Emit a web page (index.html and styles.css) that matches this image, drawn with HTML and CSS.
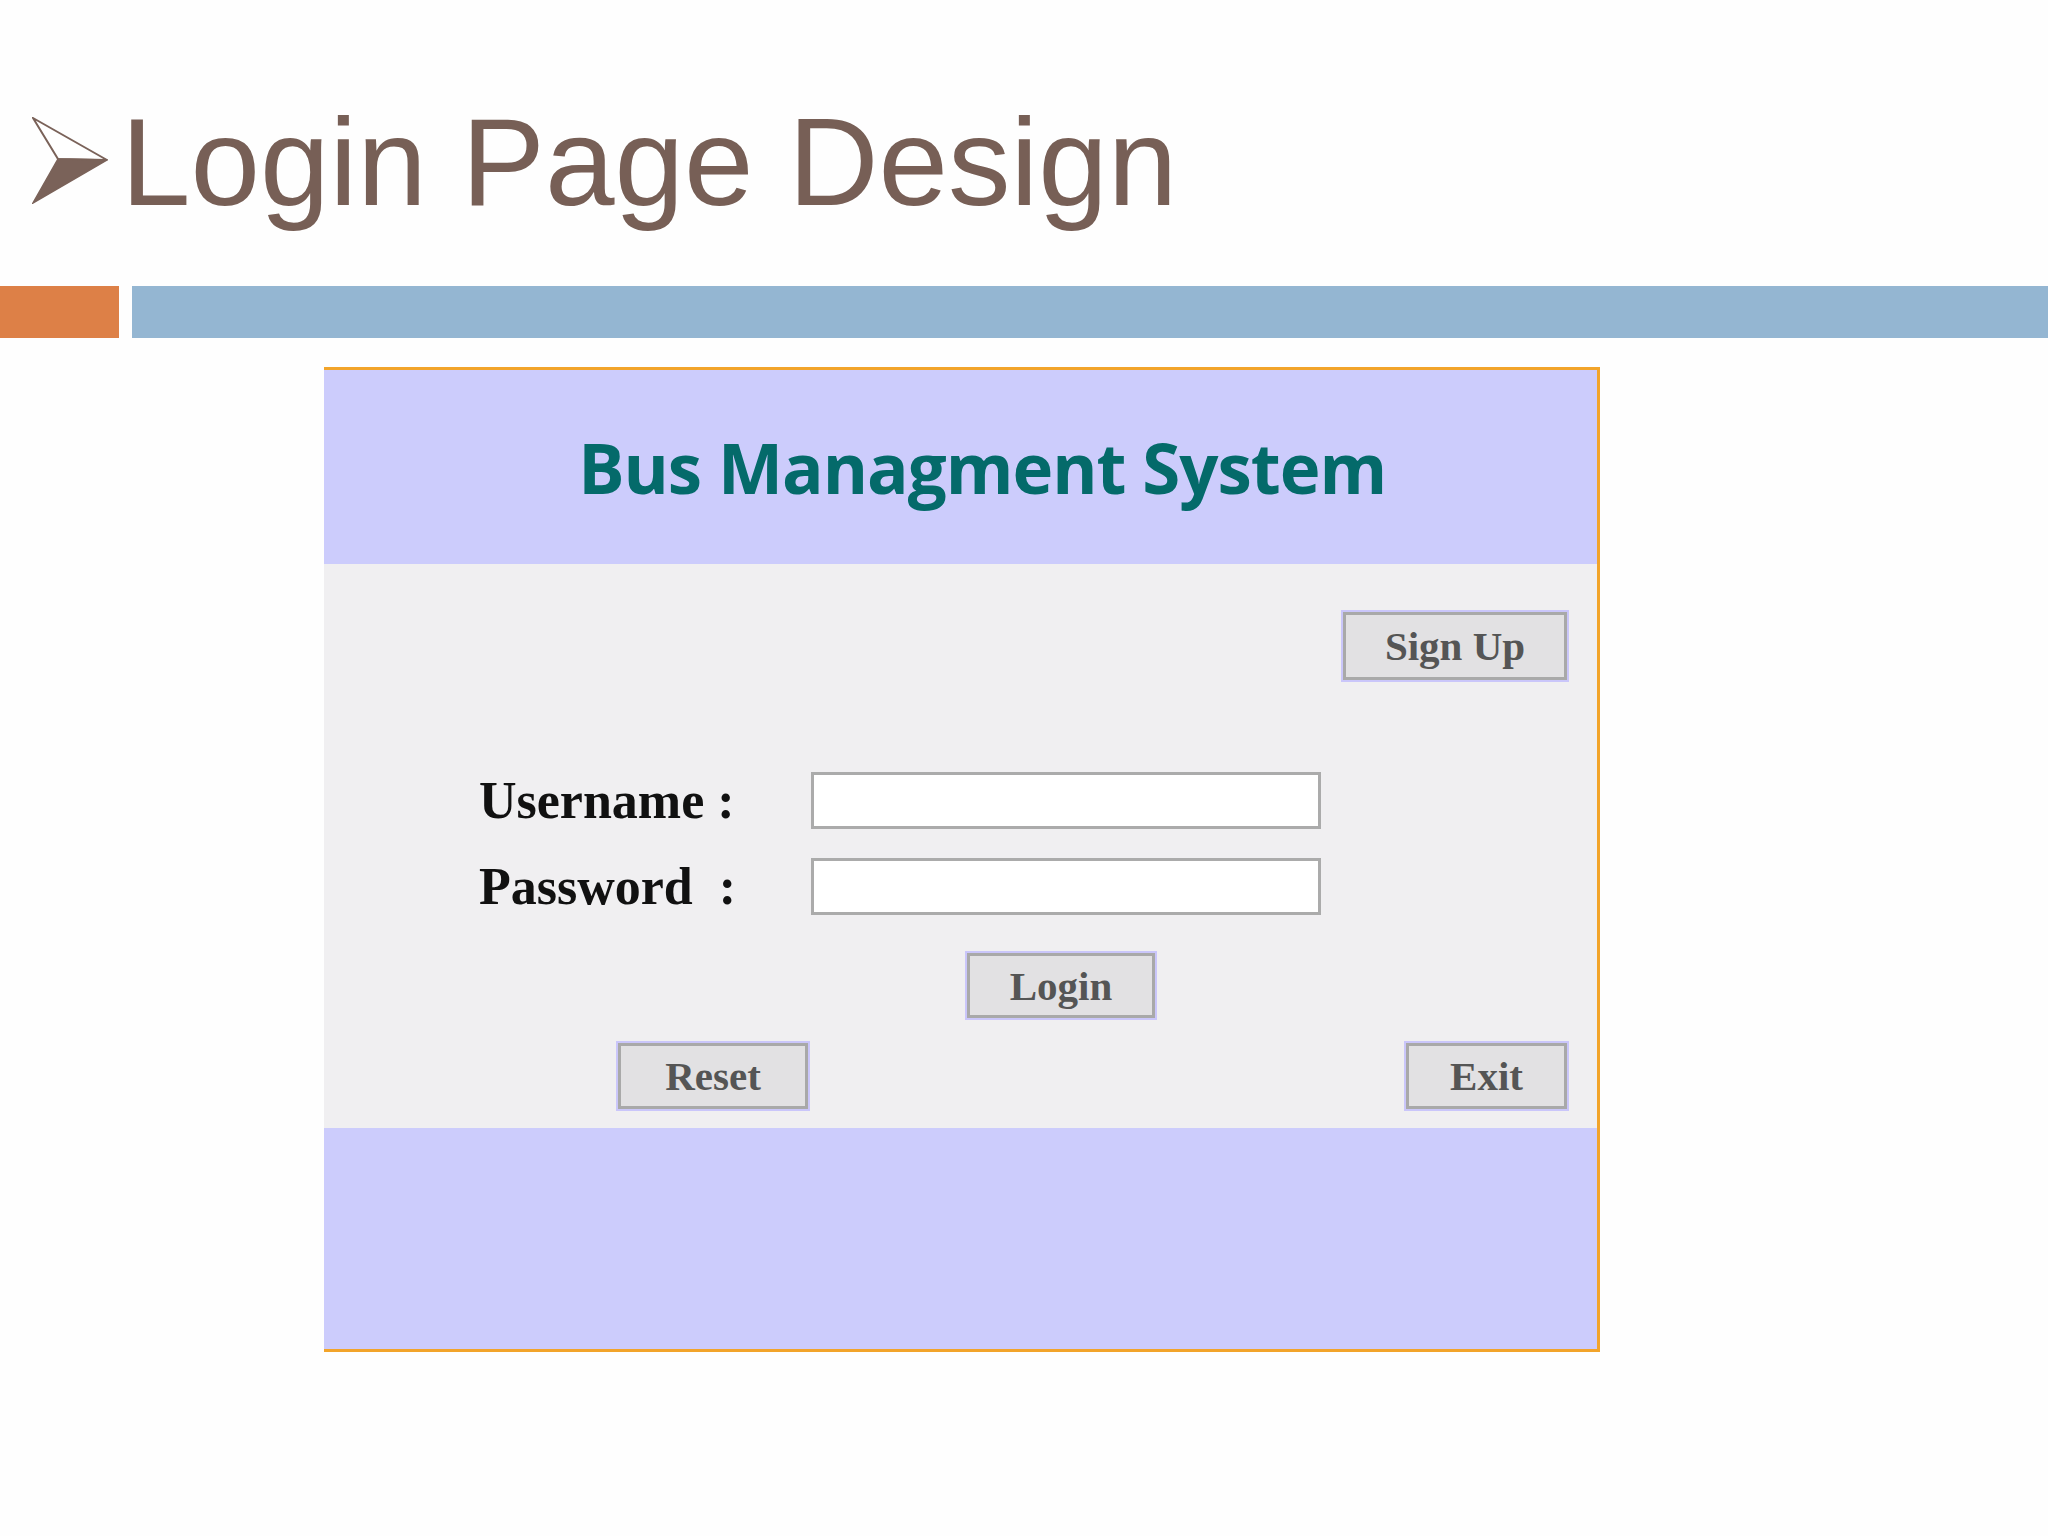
FILE: index.html
```html
<!DOCTYPE html>
<html lang="en">
  <head>
    <meta charset="UTF-8" />
    <meta name="viewport" content="width=device-width, initial-scale=1.0" />
    <title>Login Page Design</title>
    <link rel="stylesheet" href="styles.css">
  </head>
  <body>
    <div class="slide-title">
      <svg class="bullet" width="76" height="87" viewBox="0 0 76 87">
        <polygon points="1,1 75,43 26,42" fill="#ffffff" stroke="#7a6259" stroke-width="2" stroke-linejoin="miter" />
        <polygon points="26,42 75,43 1,86" fill="#7a6259" stroke="#7a6259" stroke-width="1.5" />
      </svg>
      <h1>Login Page Design</h1>
    </div>

    <div class="bars">
      <div class="bar-accent"></div>
      <div class="bar-main"></div>
    </div>

    <div class="panel">
      <div class="panel-header">
        <h2>Bus Managment System</h2>
      </div>

      <form class="panel-body" id="form">
        <div class="signup-row">
          <button type="button" class="btn btn-signup">Sign Up</button>
        </div>

        <div class="fields">
          <label for="username">Username :</label>
          <input type="text" id="username" name="username" />
          <label for="password">Password&nbsp; :</label>
          <input type="password" id="password" name="password" />
        </div>

        <div class="login-row">
          <button type="submit" class="btn btn-login">Login</button>
        </div>

        <div class="bottom-row">
          <button type="reset" class="btn btn-reset">Reset</button>
          <button type="button" class="btn btn-exit">Exit</button>
        </div>
      </form>

      <div class="panel-footer"></div>
    </div>
  </body>
</html>
```

FILE: styles.css
```css
body {
  margin: 0;
  padding: 0;
  background-color: #fefefe;
  font-family: "Liberation Sans", Arial, sans-serif;
}
.slide-title {
  display: flex;
  align-items: flex-start;
  padding-top: 99px;
  padding-left: 32px;
}
.bullet {
  margin-top: 18px;
  margin-right: 13px;
  flex-shrink: 0;
}
.slide-title h1 {
  margin: 0;
  font-family: "Liberation Sans", Arial, sans-serif;
  font-weight: normal;
  font-size: 125px;
  line-height: 126px;
  color: #775f56;
}
.bars {
  display: flex;
  gap: 13px;
  height: 52px;
  margin-top: 61px;
}
.bar-accent {
  width: 119px;
  background: #dd8047;
}
.bar-main {
  flex: 1;
  background: #94b6d2;
}
.panel {
  margin-top: 29px;
  margin-left: 324px;
  width: 1276px;
  box-sizing: border-box;
  border-top: 3px solid #f2a42a;
  border-right: 3px solid #f2a42a;
  border-bottom: 3px solid #f2a42a;
}
.panel-header {
  height: 194px;
  background: #ccccfc;
  display: flex;
  justify-content: center;
  align-items: center;
  padding-left: 44px;
}
.panel-header h2 {
  margin: 0;
  font-family: "Open Sans", "DejaVu Sans", sans-serif;
  font-weight: 700;
  font-size: 70px;
  letter-spacing: -1px;
  color: #046a6a;
  transform: scaleX(0.985);
}
.panel-body {
  height: 564px;
  box-sizing: border-box;
  background: #f0eff1;
  padding-top: 46px;
  display: flex;
  flex-direction: column;
}
.panel-footer {
  height: 221px;
  background: #ccccfc;
}
.btn {
  font-family: "Liberation Serif", "Times New Roman", serif;
  font-weight: bold;
  font-size: 41px;
  color: #555555;
  background: #e2e1e3;
  border: 2px solid #cac6fa;
  box-shadow: inset 0 0 0 3px #a9a9a9;
  padding: 0;
  height: 70px;
  cursor: pointer;
}
.signup-row {
  display: flex;
  justify-content: flex-end;
  padding-right: 28px;
}
.btn-signup {
  width: 228px;
  height: 72px;
}
.fields {
  display: grid;
  grid-template-columns: 332px 510px;
  row-gap: 27px;
  align-items: center;
  padding-left: 155px;
  margin-top: 89px;
}
.fields label {
  font-family: "Liberation Serif", "Times New Roman", serif;
  font-weight: bold;
  font-size: 52px;
  color: #111111;
  white-space: pre;
}
.fields input {
  width: 510px;
  height: 57px;
  box-sizing: border-box;
  border: 3px solid #ababab;
  background: #ffffff;
  margin: 0;
}
.login-row {
  padding-left: 641px;
  margin-top: 35px;
}
.btn-login {
  width: 192px;
  height: 69px;
}
.bottom-row {
  display: flex;
  justify-content: space-between;
  padding-left: 292px;
  padding-right: 28px;
  margin-top: 21px;
}
.btn-reset {
  width: 194px;
}
.btn-exit {
  width: 165px;
}
```
